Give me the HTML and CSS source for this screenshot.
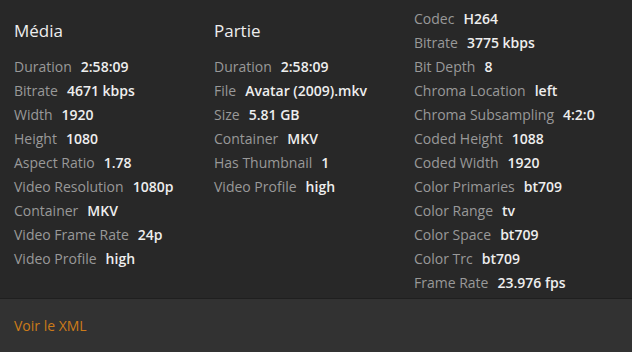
FILE: index.html
```html
<!DOCTYPE html>
<html lang="fr">
<head>
    <meta charset="UTF-8">
    <meta name="viewport" content="width=device-width, initial-scale=1.0">
    <title>Media Info</title>
    <link rel="stylesheet" href="styles.css">
</head>
<body>
    <div class="media-info">
        <div class="info-body">
            <div class="info-column">
                <h2>Média</h2>
                <ul class="info-list">
                    <li><span class="label">Duration</span><span class="value">2:58:09</span></li>
                    <li><span class="label">Bitrate</span><span class="value">4671 kbps</span></li>
                    <li><span class="label">Width</span><span class="value">1920</span></li>
                    <li><span class="label">Height</span><span class="value">1080</span></li>
                    <li><span class="label">Aspect Ratio</span><span class="value">1.78</span></li>
                    <li><span class="label">Video Resolution</span><span class="value">1080p</span></li>
                    <li><span class="label">Container</span><span class="value">MKV</span></li>
                    <li><span class="label">Video Frame Rate</span><span class="value">24p</span></li>
                    <li><span class="label">Video Profile</span><span class="value">high</span></li>
                </ul>
            </div>
            <div class="info-column">
                <h2>Partie</h2>
                <ul class="info-list">
                    <li><span class="label">Duration</span><span class="value">2:58:09</span></li>
                    <li><span class="label">File</span><span class="value">Avatar (2009).mkv</span></li>
                    <li><span class="label">Size</span><span class="value">5.81 GB</span></li>
                    <li><span class="label">Container</span><span class="value">MKV</span></li>
                    <li><span class="label">Has Thumbnail</span><span class="value">1</span></li>
                    <li><span class="label">Video Profile</span><span class="value">high</span></li>
                </ul>
            </div>
            <div class="info-column">
                <ul class="info-list">
                    <li><span class="label">Codec</span><span class="value">H264</span></li>
                    <li><span class="label">Bitrate</span><span class="value">3775 kbps</span></li>
                    <li><span class="label">Bit Depth</span><span class="value">8</span></li>
                    <li><span class="label">Chroma Location</span><span class="value">left</span></li>
                    <li><span class="label">Chroma Subsampling</span><span class="value">4:2:0</span></li>
                    <li><span class="label">Coded Height</span><span class="value">1088</span></li>
                    <li><span class="label">Coded Width</span><span class="value">1920</span></li>
                    <li><span class="label">Color Primaries</span><span class="value">bt709</span></li>
                    <li><span class="label">Color Range</span><span class="value">tv</span></li>
                    <li><span class="label">Color Space</span><span class="value">bt709</span></li>
                    <li><span class="label">Color Trc</span><span class="value">bt709</span></li>
                    <li><span class="label">Frame Rate</span><span class="value">23.976 fps</span></li>
                </ul>
            </div>
        </div>
        <div class="info-footer">
            <a href="#" class="xml-link">Voir le XML</a>
        </div>
    </div>
</body>
</html>
```

FILE: styles.css
```css
/* Media info panel */
body {
    margin: 0;
    padding: 0;
    background-color: #282828;
    font-family: "Open Sans", "Noto Sans", sans-serif;
    font-size: 14px;
}

.media-info {
    width: 632px;
    height: 352px;
    display: flex;
    flex-direction: column;
}

.info-body {
    display: flex;
    padding: 7px 14px 3px;
    background-color: #282828;
}

.info-column {
    width: 200px;
}

.info-column h2 {
    margin: 12px 0;
    font-size: 17px;
    font-weight: 400;
    line-height: 24px;
    color: #eeeeee;
}

.info-list {
    list-style: none;
    margin: 0;
    padding: 0;
}

.info-list li {
    line-height: 24px;
    white-space: nowrap;
}

.label {
    color: #999999;
}

.value {
    margin-left: 9px;
    color: #eeeeee;
    font-weight: 600;
}

.info-footer {
    flex: 1;
    display: flex;
    align-items: center;
    padding: 0 14px;
    background-color: #323232;
    border-top: 1px solid #1f1f1f;
}

.xml-link {
    color: #cc7b19;
    text-decoration: none;
    line-height: 24px;
}
```
